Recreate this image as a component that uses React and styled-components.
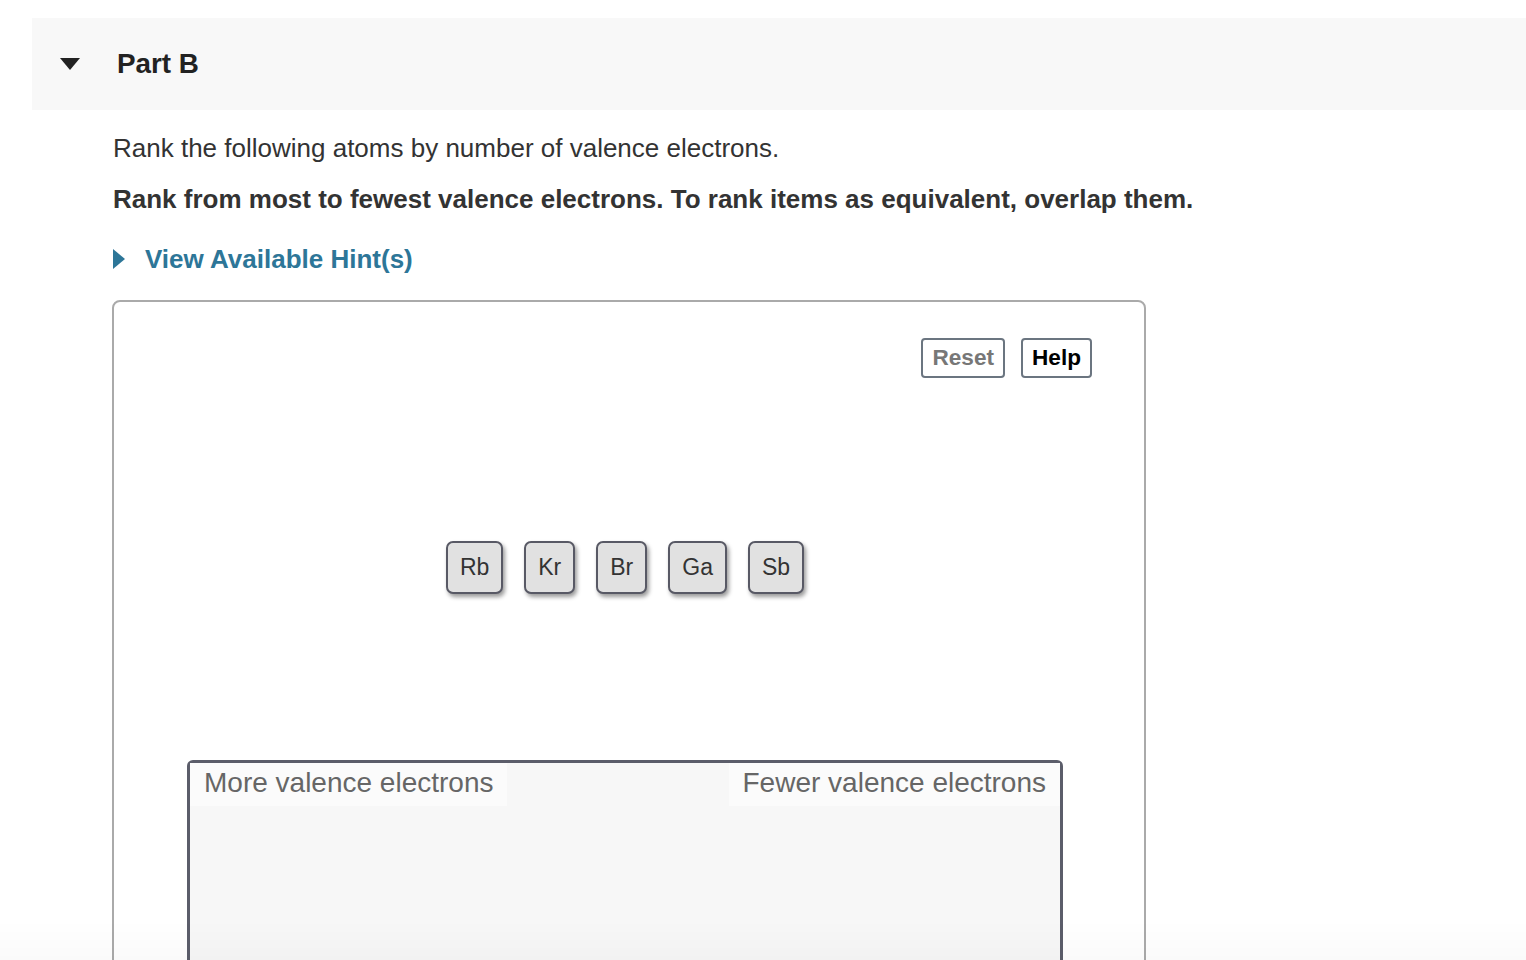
import React from "react";
import styled, { createGlobalStyle } from "styled-components";

const GlobalStyle = createGlobalStyle`
  html, body {
    margin: 0;
    padding: 0;
    background: #ffffff;
    overflow: hidden;
  }
  body {
    font-family: "Liberation Sans", Arial, Helvetica, sans-serif;
    color: #333333;
  }
`;

const Page = styled.div`
  padding-top: 18px;
  height: 942px;
  overflow: hidden;
`;

const PartHeader = styled.div`
  display: flex;
  align-items: center;
  margin-left: 32px;
  height: 92px;
  padding-left: 28px;
  background: #f8f8f8;
`;

const Caret = styled.span`
  display: inline-block;
  width: 0;
  height: 0;
  ${(props) =>
    props.down
      ? `
    border-left: 10px solid transparent;
    border-right: 10px solid transparent;
    border-top: 12px solid ${props.color};
  `
      : `
    border-top: 10px solid transparent;
    border-bottom: 10px solid transparent;
    border-left: 12px solid ${props.color};
  `}
`;

const PartTitle = styled.h2`
  margin: 0 0 0 37px;
  font-size: 27.8px;
  font-weight: bold;
  color: #222222;
`;

const Content = styled.div`
  margin-left: 112px;
`;

const Prompt = styled.p`
  margin: ${(props) => props.top || 0}px 0 0 1px;
  font-size: 26px;
  line-height: 36px;
  font-weight: ${(props) => (props.bold ? "bold" : "normal")};
  color: #333333;
`;

const HintToggle = styled.div`
  display: flex;
  align-items: center;
  margin-top: 24px;
  height: 36px;
  padding-left: 1px;
`;

const HintLabel = styled.span`
  margin-left: 20px;
  font-size: 26px;
  font-weight: bold;
  color: #2d7698;
`;

const Panel = styled.div`
  margin-top: 23px;
  width: 1034px;
  height: 700px;
  border: 2px solid #aaaaaa;
  border-radius: 8px;
  padding: 36px 52px 0 73px;
  box-sizing: border-box;
`;

const Toolbar = styled.div`
  display: flex;
  justify-content: flex-end;
  gap: 16px;
`;

const ToolButton = styled.button`
  height: 40px;
  padding: 0 9px;
  border: 2px solid #6b7580;
  border-radius: 4px;
  background: #ffffff;
  font-family: "Liberation Sans", Arial, sans-serif;
  font-size: 22.6px;
  font-weight: bold;
  color: ${(props) => (props.muted ? "#777777" : "#000000")};
`;

const TileRow = styled.div`
  display: flex;
  justify-content: center;
  gap: 21px;
  margin-top: 163px;
  width: 876px;
`;

const Tile = styled.div`
  display: flex;
  align-items: center;
  justify-content: center;
  height: 53px;
  padding: 0 12px;
  box-sizing: border-box;
  background: #e1e1e1;
  border: 2px solid #585965;
  border-radius: 7px;
  box-shadow: 2px 3px 4px rgba(0, 0, 0, 0.4);
  font-size: 23px;
  color: #333333;
`;

const RankBox = styled.div`
  margin-top: 166px;
  width: 876px;
  height: 400px;
  box-sizing: border-box;
  border: 3px solid #5b5d6a;
  border-radius: 6px;
  background: #f7f7f7;
  display: flex;
  justify-content: space-between;
  align-items: flex-start;
`;

const RankLabel = styled.div`
  height: 43px;
  line-height: 40px;
  padding: 0 14px;
  background: #fbfbfb;
  font-size: 28px;
  color: #666666;
`;

const BottomFade = styled.div`
  position: fixed;
  left: 0;
  right: 0;
  bottom: 0;
  height: 40px;
  pointer-events: none;
  background: linear-gradient(rgba(0, 0, 0, 0), rgba(0, 0, 0, 0.02));
`;

const atoms = ["Rb", "Kr", "Br", "Ga", "Sb"];

export default function App() {
  return (
    <>
      <GlobalStyle />
      <Page>
        <PartHeader>
          <Caret down color="#222222" />
          <PartTitle>Part B</PartTitle>
        </PartHeader>
        <Content>
          <Prompt top={20}>
            Rank the following atoms by number of valence electrons.
          </Prompt>
          <Prompt bold top={15}>
            Rank from most to fewest valence electrons. To rank items as
            equivalent, overlap them.
          </Prompt>
          <HintToggle>
            <Caret color="#2d7698" />
            <HintLabel>View Available Hint(s)</HintLabel>
          </HintToggle>
          <Panel>
            <Toolbar>
              <ToolButton muted>Reset</ToolButton>
              <ToolButton>Help</ToolButton>
            </Toolbar>
            <TileRow>
              {atoms.map((a) => (
                <Tile key={a}>{a}</Tile>
              ))}
            </TileRow>
            <RankBox>
              <RankLabel>More valence electrons</RankLabel>
              <RankLabel>Fewer valence electrons</RankLabel>
            </RankBox>
          </Panel>
        </Content>
      </Page>
      <BottomFade />
    </>
  );
}
